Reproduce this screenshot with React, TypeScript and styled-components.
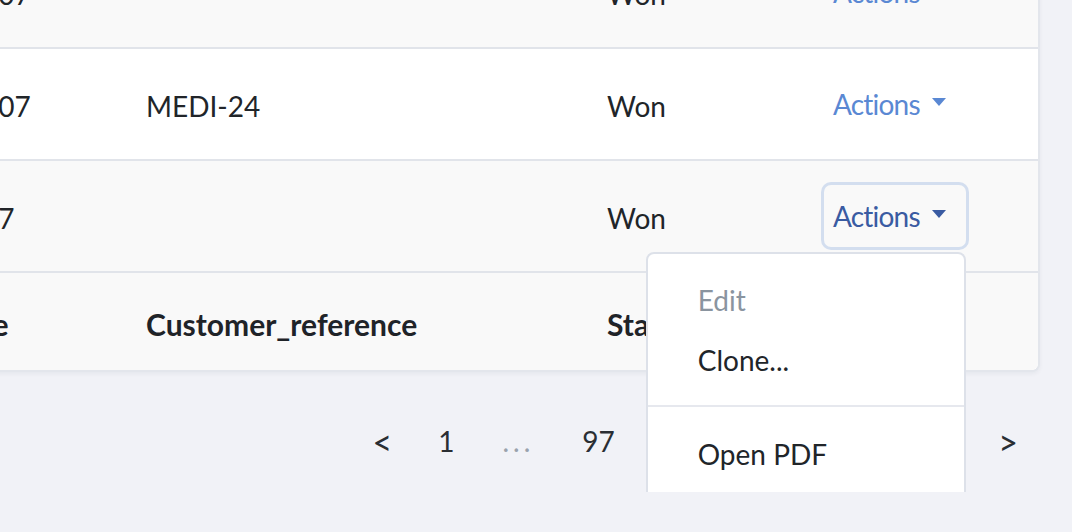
import styled, { createGlobalStyle } from 'styled-components';

const GlobalStyle = createGlobalStyle`
  html, body {
    margin: 0;
    padding: 0;
    background-color: #f1f2f7;
    font-family: Lato, 'Liberation Sans', sans-serif;
    color: #212529;
  }
  * {
    box-sizing: border-box;
  }
`;

const columns = '266px 461px 226px 1fr';

interface rowData {
  date: string;
  reference: string;
  status: string;
  open?: boolean;
}

const rows: rowData[] = [
  { date: '2021-10-07', reference: '', status: 'Won' },
  { date: '2021-10-07', reference: 'MEDI-24', status: 'Won' },
  { date: '2021-10-7', reference: '', status: 'Won', open: true },
];

const pages = ['<', '1', '...', '97', '98', '99', '100', '...', '>'];

const App = () => {
  return (
    <>
      <GlobalStyle />
      <Main>
        <Card>
          {rows.map((row, i) => (
            <Row key={i} striped={i % 2 === 0}>
              <Cell>{row.date}</Cell>
              <Cell>{row.reference}</Cell>
              <Cell>{row.status}</Cell>
              <ActionCell>
                <Dropdown>
                  <ActionsButton open={row.open}>
                    Actions
                    <Caret />
                  </ActionsButton>
                  {row.open && (
                    <Menu>
                      <MenuItem disabled>Edit</MenuItem>
                      <MenuItem>Clone...</MenuItem>
                      <Divider />
                      <MenuItem>Open PDF</MenuItem>
                    </Menu>
                  )}
                </Dropdown>
              </ActionCell>
            </Row>
          ))}
          <FooterRow>
            <HeadCell>Due_date</HeadCell>
            <HeadCell>Customer_reference</HeadCell>
            <HeadCell>Status</HeadCell>
            <HeadCell />
          </FooterRow>
        </Card>
        <Pagination>
          {pages.map((p, i) => (
            <PageItem key={i} muted={p === '...'} arrow={p === '<' || p === '>'}>
              {p}
            </PageItem>
          ))}
        </Pagination>
      </Main>
    </>
  );
};

export default App;

const Main = styled.div`
  height: 492px;
  overflow: hidden;
  padding-right: 32px;
`;

const Card = styled.div`
  margin-top: -63px;
  margin-left: -146px;
  background-color: #ffffff;
  border: 2px solid #e3e6ec;
  border-top: none;
  border-radius: 0 0 8px 8px;
  box-shadow: 0 2px 4px rgba(20, 30, 60, 0.05);
`;

const Row = styled.div<{ striped?: boolean }>`
  display: grid;
  grid-template-columns: ${columns};
  height: 112px;
  border-bottom: 2px solid #e1e4ea;
  background-color: ${({ striped }) => (striped ? '#f9f9f9' : '#ffffff')};
`;

const Cell = styled.div`
  display: flex;
  align-items: center;
  padding: 4px 24px 0;
  font-size: 28px;
  white-space: nowrap;
`;

const ActionCell = styled.div`
  display: flex;
  align-items: center;
  padding-left: 15px;
`;

const Dropdown = styled.div`
  position: relative;
  display: inline-flex;
`;

const ActionsButton = styled.button<{ open?: boolean }>`
  display: flex;
  align-items: center;
  gap: 12px;
  height: 62px;
  padding: 0 20px 0 9px;
  border: none;
  border-radius: 7px;
  background: transparent;
  font-family: inherit;
  font-size: 28px;
  letter-spacing: -0.8px;
  color: ${({ open }) => (open ? '#3a5ba2' : '#5a88d3')};
  box-shadow: ${({ open }) => (open ? '0 0 0 3px #d3deef' : 'none')};
  cursor: pointer;
`;

const Caret = styled.span`
  width: 0;
  height: 0;
  margin-top: -4px;
  border-left: 7px solid transparent;
  border-right: 7px solid transparent;
  border-top: 8px solid currentColor;
`;

const Menu = styled.div`
  position: absolute;
  top: calc(100% + 5px);
  right: 0;
  width: 320px;
  height: 300px;
  padding-top: 15px;
  background-color: #ffffff;
  border: 2px solid #dde1e9;
  border-radius: 8px;
  z-index: 10;
`;

const MenuItem = styled.div<{ disabled?: boolean }>`
  display: flex;
  align-items: center;
  height: 60px;
  padding: 2px 50px 0;
  font-size: 28px;
  color: ${({ disabled }) => (disabled ? '#8a949f' : '#212529')};
`;

const Divider = styled.div`
  height: 2px;
  margin: 16px 0;
  background-color: #e6e8ee;
`;

const FooterRow = styled.div`
  display: grid;
  grid-template-columns: ${columns};
  height: 97px;
  background-color: #f9f9f9;
  border-radius: 0 0 7px 7px;
`;

const HeadCell = styled.div`
  display: flex;
  align-items: center;
  padding: 4px 24px 0;
  font-size: 30px;
  font-weight: 700;
  white-space: nowrap;
  color: #1f2328;
`;

const Pagination = styled.div`
  display: flex;
  justify-content: flex-end;
  margin-top: 37px;
`;

const PageItem = styled.div<{ muted?: boolean; arrow?: boolean }>`
  display: flex;
  align-items: center;
  height: 64px;
  padding: 0 ${({ arrow }) => (arrow ? '22px' : '24px')};
  font-size: ${({ arrow }) => (arrow ? '34px' : '28px')};
  letter-spacing: ${({ muted }) => (muted ? '4px' : '0')};
  color: ${({ muted }) => (muted ? '#9aa2ad' : '#2a2e33')};
`;
